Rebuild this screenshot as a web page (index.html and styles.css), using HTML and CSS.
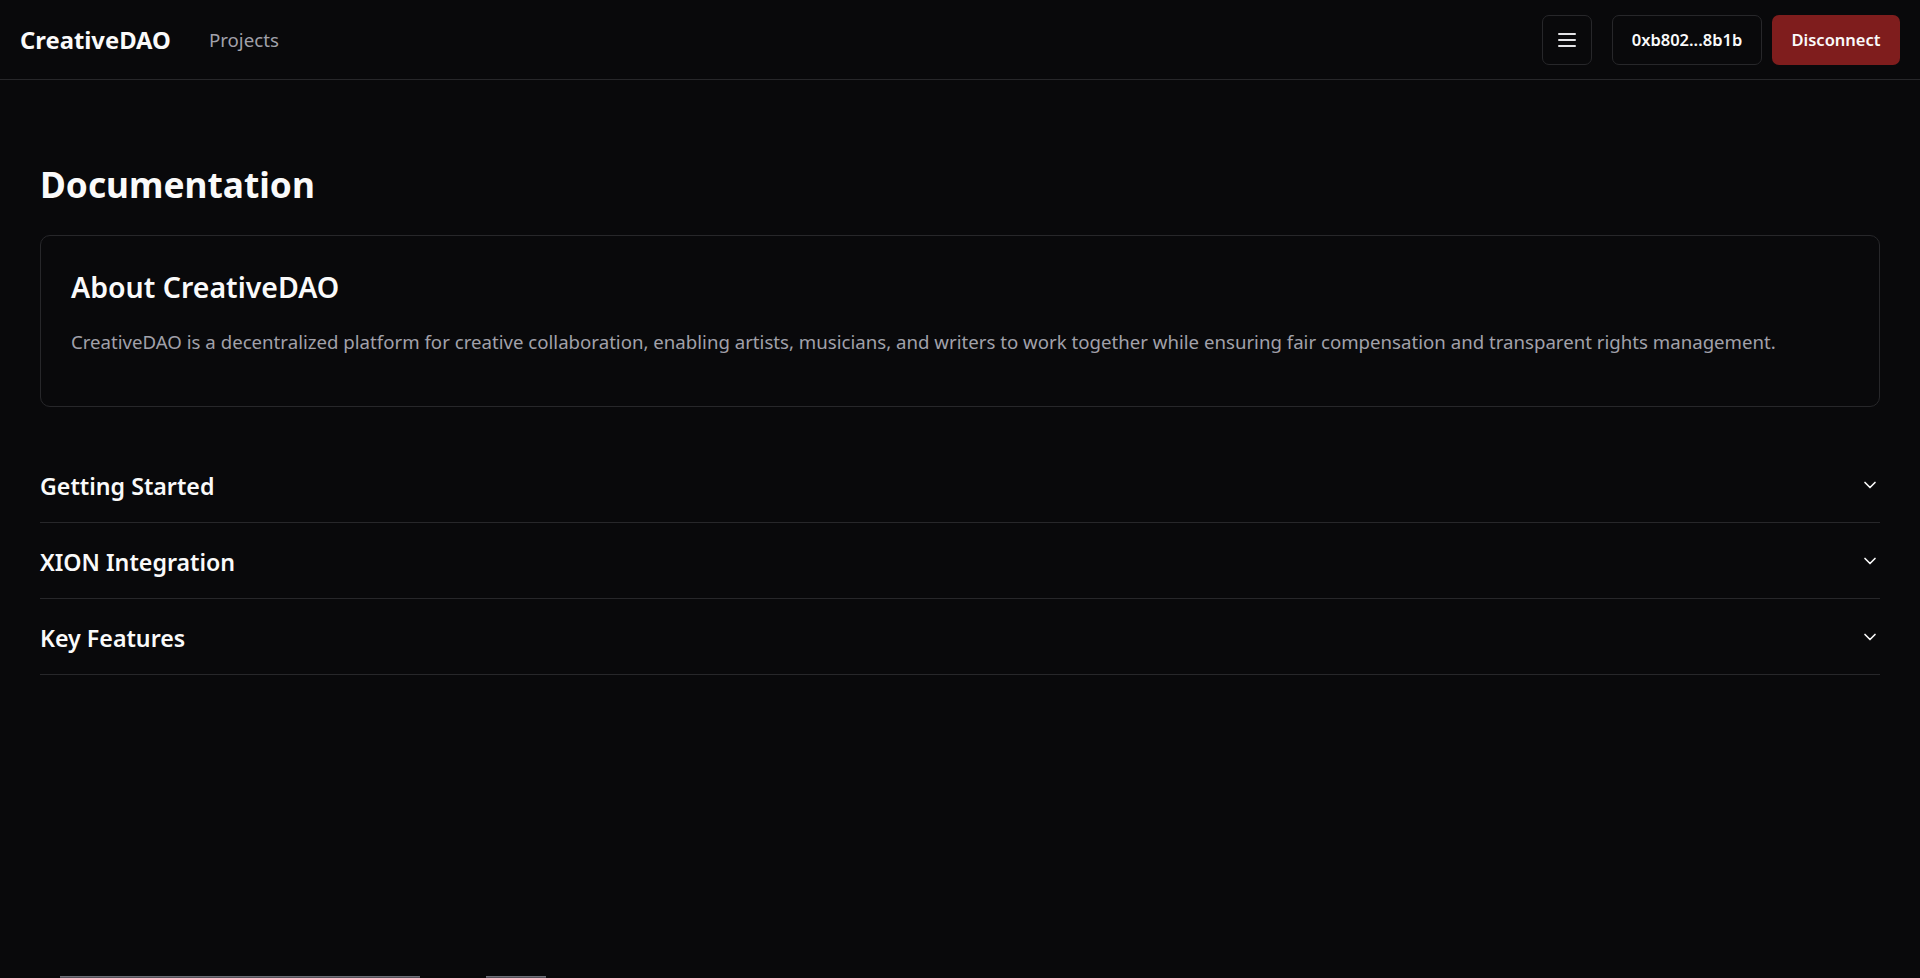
FILE: index.html
```html
<!DOCTYPE html>
<html lang="en">
<head>
    <meta charset="UTF-8">
    <meta name="viewport" content="width=device-width, initial-scale=1.0">
    <title>Documentation - CreativeDAO</title>
    <link rel="stylesheet" href="styles.css">
</head>
<body>
    <header class="topbar">
        <div class="brand-nav">
            <a class="brand" href="#">CreativeDAO</a>
            <nav class="main-nav">
                <a href="#">Projects</a>
            </nav>
        </div>
        <div class="actions">
            <button class="icon-button" aria-label="Menu">
                <svg width="24" height="24" viewBox="0 0 24 24" fill="none" stroke="currentColor" stroke-width="2" stroke-linecap="round" stroke-linejoin="round">
                    <line x1="4" y1="6" x2="20" y2="6"></line>
                    <line x1="4" y1="12" x2="20" y2="12"></line>
                    <line x1="4" y1="18" x2="20" y2="18"></line>
                </svg>
            </button>
            <div class="wallet">
                <button class="outline-button">0xb802...8b1b</button>
                <button class="danger-button">Disconnect</button>
            </div>
        </div>
    </header>

    <main class="page">
        <h1 class="page-title">Documentation</h1>

        <section class="card">
            <h2 class="card-title">About CreativeDAO</h2>
            <p class="card-text">CreativeDAO is a decentralized platform for creative collaboration, enabling artists, musicians, and writers to work together while ensuring fair compensation and transparent rights management.</p>
        </section>

        <div class="accordion">
            <div class="accordion-item">
                <button class="accordion-trigger">
                    <span>Getting Started</span>
                    <svg width="20" height="20" viewBox="0 0 24 24" fill="none" stroke="currentColor" stroke-width="2" stroke-linecap="round" stroke-linejoin="round"><path d="m6 9 6 6 6-6"></path></svg>
                </button>
            </div>
            <div class="accordion-item">
                <button class="accordion-trigger">
                    <span>XION Integration</span>
                    <svg width="20" height="20" viewBox="0 0 24 24" fill="none" stroke="currentColor" stroke-width="2" stroke-linecap="round" stroke-linejoin="round"><path d="m6 9 6 6 6-6"></path></svg>
                </button>
            </div>
            <div class="accordion-item">
                <button class="accordion-trigger">
                    <span>Key Features</span>
                    <svg width="20" height="20" viewBox="0 0 24 24" fill="none" stroke="currentColor" stroke-width="2" stroke-linecap="round" stroke-linejoin="round"><path d="m6 9 6 6 6-6"></path></svg>
                </button>
            </div>
        </div>
    </main>

    <!-- leftover scrollbars at the bottom edge -->
    <div class="scroll-strip">
        <span class="scroll-thumb wide"></span>
        <span class="scroll-thumb narrow"></span>
    </div>
</body>
</html>
```

FILE: styles.css
```css
* {
    box-sizing: border-box;
}

body {
    margin: 0;
    min-height: 100vh;
    font-family: 'Noto Sans', 'Open Sans', sans-serif;
    background-color: #09090b;
    color: #fafafa;
}

a {
    color: inherit;
    text-decoration: none;
}

button {
    font-family: inherit;
    cursor: pointer;
}

/* top bar */
.topbar {
    height: 80px;
    padding: 0 20px;
    display: flex;
    align-items: center;
    justify-content: space-between;
    border-bottom: 1px solid #27272a;
}

.brand-nav {
    display: flex;
    align-items: center;
    gap: 38px;
}

.brand {
    font-size: 23.8px;
    font-weight: 700;
}

.main-nav a {
    font-size: 18.7px;
    color: #a1a1aa;
}

.actions {
    display: flex;
    align-items: center;
    gap: 20px;
}

.wallet {
    display: flex;
    gap: 10px;
}

.icon-button,
.outline-button,
.danger-button {
    height: 50px;
    border-radius: 7px;
    font-size: 16.5px;
    font-weight: 600;
    color: #fafafa;
}

.icon-button {
    width: 50px;
    display: flex;
    align-items: center;
    justify-content: center;
    background-color: #09090b;
    border: 1px solid #27272a;
    color: #e4e4e7;
}

.outline-button {
    width: 150px;
    background-color: #09090b;
    border: 1px solid #27272a;
}

.danger-button {
    width: 128px;
    background-color: #7f1d1d;
    border: none;
}

/* content */
.page {
    padding: 82px 40px 40px;
}

.page-title {
    margin: 0 0 28px;
    font-size: 35.3px;
    line-height: 45px;
    font-weight: 700;
}

.card {
    border: 1px solid #27272a;
    border-radius: 10px;
    padding: 31px 30px 29px;
}

.card-title {
    margin: 0 0 20px;
    font-size: 28.5px;
    line-height: 40px;
    font-weight: 600;
}

.card-text {
    margin: 0 0 20px;
    font-size: 18.65px;
    line-height: 30px;
    color: #a1a1aa;
}

.accordion {
    margin-top: 40px;
}

.accordion-item {
    border-bottom: 1px solid #27272a;
}

.accordion-trigger {
    width: 100%;
    padding: 22px 0 18px;
    display: flex;
    align-items: center;
    justify-content: space-between;
    background: none;
    border: none;
    color: #fafafa;
    font-size: 23.2px;
    line-height: 35px;
    font-weight: 600;
    text-align: left;
}

.accordion-trigger svg {
    flex-shrink: 0;
    margin-top: -4px;
}

/* bottom strip */
.scroll-strip {
    position: fixed;
    left: 0;
    right: 0;
    bottom: 0;
    height: 2px;
}

.scroll-thumb {
    position: absolute;
    bottom: 0;
    height: 2px;
    background-color: #52525b;
    border-top: 1px solid #71717a;
}

.scroll-thumb.wide {
    left: 60px;
    width: 360px;
}

.scroll-thumb.narrow {
    left: 486px;
    width: 60px;
}
```
